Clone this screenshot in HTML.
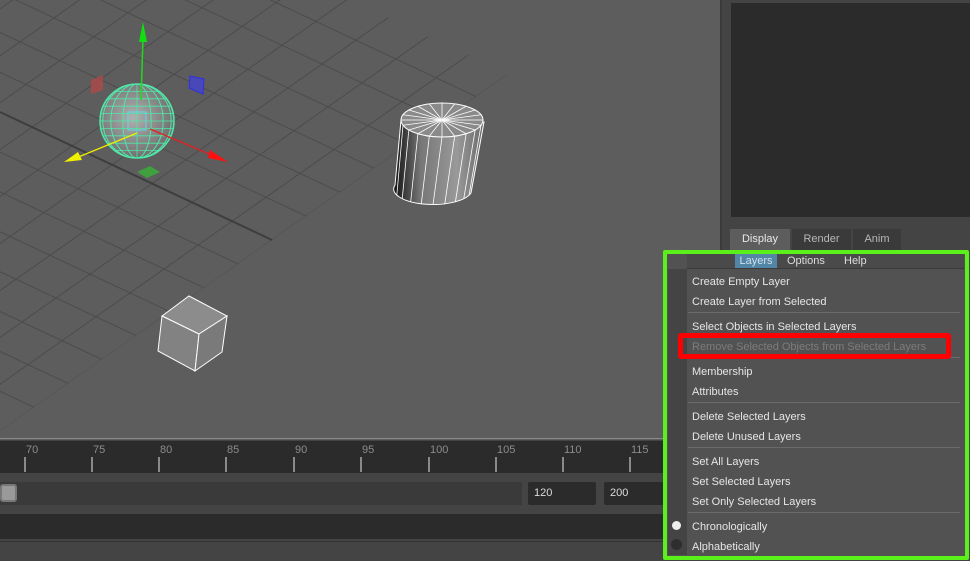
<!DOCTYPE html>
<html><head><meta charset="utf-8"><style>
*{margin:0;padding:0;box-sizing:border-box}
html,body{width:970px;height:561px;overflow:hidden}
body{background:#444;font-family:"Liberation Sans","DejaVu Sans",sans-serif;position:relative}
.abs{position:absolute}
.mi{position:absolute;left:692px;font-size:11px;color:#e6e6e6;line-height:14px}
.sep{position:absolute;left:688px;width:272px;height:1px;background:#6a6a6a}
.tk{position:absolute;top:457px;width:2px;height:15px;background:#8a8a8a}
.tn{position:absolute;top:444px;font-size:11px;color:#8c8c8c}
</style></head><body>
<svg class="abs" style="left:0;top:0" width="720" height="440" viewBox="0 0 720 440">
<defs><clipPath id="gc"><polygon points="0,0 350,0 508,74 0,431"/></clipPath>
<radialGradient id="sg" cx="0.45" cy="0.45" r="0.6"><stop offset="0" stop-color="#b0b0b0"/><stop offset="1" stop-color="#6a6a6a"/></radialGradient>
<linearGradient id="cg" x1="0" x2="1"><stop offset="0" stop-color="#111"/><stop offset="0.3" stop-color="#777"/><stop offset="0.7" stop-color="#999"/><stop offset="1" stop-color="#6a6a6a"/></linearGradient></defs>
<rect width="720" height="440" fill="#5d5d5d"/>
<g id="grid" clip-path="url(#gc)" stroke="#4c4c4c" stroke-width="1"></g>
<line x1="0" y1="112" x2="272" y2="240" stroke="#3e3e3e" stroke-width="2"/>
<line x1="0" y1="438.5" x2="720" y2="438.5" stroke="#8a8a8a" stroke-width="1"/>
<circle cx="137" cy="121" r="37" fill="url(#sg)" stroke="#4fe8a8" stroke-width="1.5"/>
<g fill="none" stroke="#4fe8a8" stroke-width="0.8" id="sph"></g>
<rect x="128" y="112" width="18" height="18" fill="none" stroke="#60d8e8" stroke-width="1"/>
<line x1="141" y1="100" x2="143" y2="38" stroke="#20d820" stroke-width="1.5"/>
<polygon points="143,22 139,42 147,42" fill="#10e010"/>
<line x1="137" y1="133" x2="76" y2="158" stroke="#f0f000" stroke-width="1.3"/>
<polygon points="64,162 78,152 82,160" fill="#f0f000"/>
<line x1="150" y1="129" x2="214" y2="156" stroke="#e02020" stroke-width="1.3"/>
<polygon points="228,162 210,150 208,158" fill="#ff1010"/>
<polygon points="91,80 103,75 103,90 91,94" fill="#b04848" opacity="0.8"/>
<polygon points="190,76 204,79 203,94 189,88" fill="#4848b8" stroke="#3030e0" stroke-width="1"/>
<polygon points="137,172 150,166 160,172 147,178" fill="#40a040"/>
<!-- cylinder -->
<path d="M401,120 L395,185 A38,15 0 0 0 471,193 L484,122 Z" fill="url(#cg)" stroke="#fff" stroke-width="1"/>
<g id="cyl" stroke="#fff" stroke-width="0.8" fill="none"></g>
<ellipse cx="442" cy="120" rx="41" ry="17" fill="#8a8a8a" stroke="#fff" stroke-width="1"/>
<g id="cyt" stroke="#fff" stroke-width="0.8" fill="none"></g>
<polygon points="189,296 227,316 199,334 162,316" fill="#8c8c8c" stroke="#fff" stroke-width="1"/>
<polygon points="162,316 199,334 195,371 158,351" fill="#828282" stroke="#fff" stroke-width="1"/>
<polygon points="199,334 227,316 222,352 195,371" fill="#7a7a7a" stroke="#fff" stroke-width="1"/>
</svg>
<script>
(function(){var g=document.getElementById('grid'),s='';
for(var i=-20;i<20;i++){var ex=272+i*34,ey=240-i*34*0.703;s+='<line x1="'+(ex-900)+'" y1="'+(ey-900*0.47)+'" x2="'+ex+'" y2="'+ey+'"/>';}
for(var j=-10;j<20;j++){var px=272-j*40,py=240-j*40*0.47;s+='<line x1="'+(px+700)+'" y1="'+(py-700*0.703)+'" x2="'+(px-700)+'" y2="'+(py+700*0.703)+'"/>';}
g.innerHTML=s;
var sp=document.getElementById('sph'),t='';
for(var k=1;k<10;k++){var y=121-37+k*7.4,w=Math.sqrt(37*37-Math.pow(y-121,2));t+='<line x1="'+(137-w)+'" y1="'+y+'" x2="'+(137+w)+'" y2="'+y+'"/>';}
for(var k=1;k<8;k++){var rx=37*Math.abs(Math.cos(k*Math.PI/8));t+='<ellipse cx="137" cy="121" rx="'+rx+'" ry="37"/>';}
sp.innerHTML=t;
var c=document.getElementById('cyl'),u='',v='';
for(var k=0;k<20;k++){var a=k*Math.PI/10;var x=442+41*Math.cos(a),y=120+17*Math.sin(a);v+='<line x1="442" y1="120" x2="'+x+'" y2="'+y+'"/>';if(Math.sin(a)>0.05){var bx=433+38*Math.cos(a),by=190+15*Math.sin(a);u+='<line x1="'+x+'" y1="'+y+'" x2="'+bx+'" y2="'+by+'"/>';}}
c.innerHTML=u;document.getElementById('cyt').innerHTML=v;})();
</script>
<div class="abs" style="left:720px;top:0;width:2px;height:250px;background:#3a3a3a"></div>
<div class="abs" style="left:731px;top:3px;width:239px;height:214px;background:#2b2b2b"></div>
<div class="abs" style="left:730px;top:229px;width:60px;height:21px;background:#5d5d5d;color:#e8e8e8;font-size:11px;text-align:center;line-height:21px">Display</div>
<div class="abs" style="left:792px;top:229px;width:59px;height:21px;background:#3a3a3a;color:#b8b8b8;font-size:11px;text-align:center;line-height:21px">Render</div>
<div class="abs" style="left:853px;top:229px;width:48px;height:21px;background:#3a3a3a;color:#b8b8b8;font-size:11px;text-align:center;line-height:21px">Anim</div>
<div class="abs" style="left:0;top:441px;width:665px;height:32px;background:#2b2b2b"></div>
<div class="tn" style="left:26px">70</div><div class="tk" style="left:24px"></div>
<div class="tn" style="left:93px">75</div><div class="tk" style="left:91px"></div>
<div class="tn" style="left:160px">80</div><div class="tk" style="left:158px"></div>
<div class="tn" style="left:227px">85</div><div class="tk" style="left:225px"></div>
<div class="tn" style="left:295px">90</div><div class="tk" style="left:293px"></div>
<div class="tn" style="left:362px">95</div><div class="tk" style="left:360px"></div>
<div class="tn" style="left:430px">100</div><div class="tk" style="left:428px"></div>
<div class="tn" style="left:497px">105</div><div class="tk" style="left:495px"></div>
<div class="tn" style="left:564px">110</div><div class="tk" style="left:562px"></div>
<div class="tn" style="left:631px">115</div><div class="tk" style="left:629px"></div>
<div class="abs" style="left:0;top:482px;width:522px;height:23px;background:#3a3a3a"></div>
<div class="abs" style="left:0;top:484px;width:17px;height:18px;background:#999;border-radius:3px;border:2px solid #777"></div>
<div class="abs" style="left:528px;top:482px;width:68px;height:23px;background:#2b2b2b;color:#ddd;font-size:11px;line-height:23px;padding-left:6px;border-radius:2px">120</div>
<div class="abs" style="left:604px;top:482px;width:60px;height:23px;background:#2b2b2b;color:#ddd;font-size:11px;line-height:23px;padding-left:6px;border-radius:2px">200</div>
<div class="abs" style="left:0;top:514px;width:665px;height:25px;background:#2b2b2b"></div>
<div class="abs" style="left:0;top:541px;width:665px;height:1px;background:#333"></div>
<div class="abs" style="left:663px;top:250px;width:306px;height:310px;background:#525252;border:4px solid #5cf01a;border-radius:2px"></div>
<div class="abs" style="left:668px;top:269px;width:19px;height:286px;background:#444"></div>
<div class="abs" style="left:687px;top:254px;width:277px;height:15px;background:#4a4a4a"></div>
<div class="abs" style="left:735px;top:254px;width:42px;height:15px;background:#5285a6;color:#cfe0ea;font-size:11px;text-align:center;line-height:15px">Layers</div>
<div class="abs" style="left:787px;top:254px;color:#ddd;font-size:11px;line-height:15px">Options</div>
<div class="abs" style="left:844px;top:254px;color:#ddd;font-size:11px;line-height:15px">Help</div>
<div class="abs" style="left:687px;top:268px;width:277px;height:1px;background:#3a3a3a"></div>
<div class="mi" style="top:275px">Create Empty Layer</div>
<div class="mi" style="top:295px">Create Layer from Selected</div>
<div class="sep" style="top:312px"></div>
<div class="mi" style="top:320px">Select Objects in Selected Layers</div>
<div class="mi" style="top:340px;color:#7c7c7c">Remove Selected Objects from Selected Layers</div>
<div class="sep" style="top:357px"></div>
<div class="mi" style="top:365px">Membership</div>
<div class="mi" style="top:385px">Attributes</div>
<div class="sep" style="top:402px"></div>
<div class="mi" style="top:410px">Delete Selected Layers</div>
<div class="mi" style="top:430px">Delete Unused Layers</div>
<div class="sep" style="top:447px"></div>
<div class="mi" style="top:455px">Set All Layers</div>
<div class="mi" style="top:475px">Set Selected Layers</div>
<div class="mi" style="top:495px">Set Only Selected Layers</div>
<div class="sep" style="top:512px"></div>
<div class="mi" style="top:520px">Chronologically</div>
<div class="mi" style="top:540px">Alphabetically</div>
<div class="abs" style="left:672px;top:521px;width:9px;height:9px;border-radius:50%;background:#eee"></div>
<div class="abs" style="left:671px;top:539px;width:11px;height:11px;border-radius:50%;background:#2e2e2e"></div>
<div class="abs" style="left:678px;top:333px;width:273px;height:26px;border:5px solid #ff0000;border-radius:3px"></div>
</body></html>
